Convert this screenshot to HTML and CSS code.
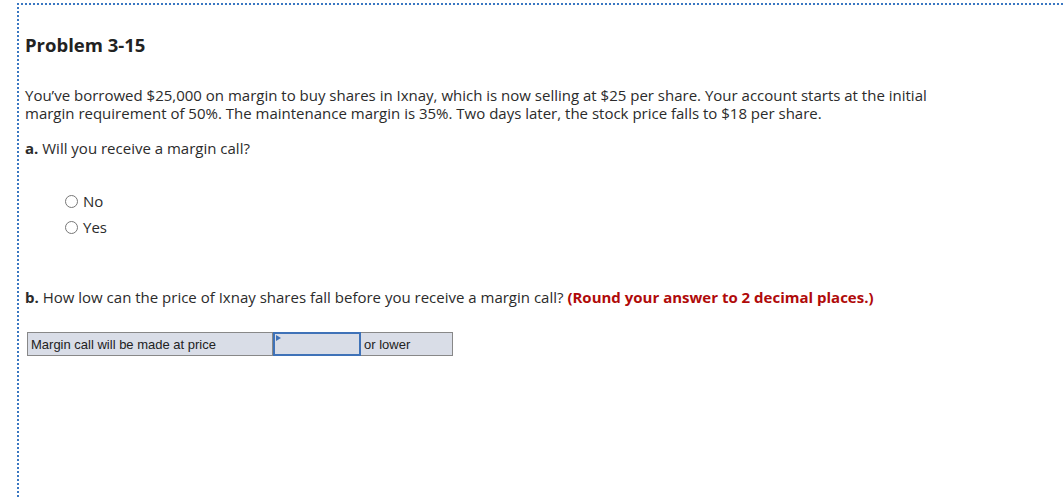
FILE: index.html
```html
<!DOCTYPE html>
<html>
<head>
<meta charset="utf-8">
<link rel="stylesheet" href="styles.css">
</head>
<body>
<div class="frame">
  <h1 class="title">Problem 3-15</h1>
  <p class="intro">You’ve borrowed $25,000 on margin to buy shares in Ixnay, which is now selling at $25 per share. Your account starts at the initial margin requirement of 50%. The maintenance margin is 35%. Two days later, the stock price falls to $18 per share.</p>
  <p class="q"><b>a.</b> Will you receive a margin call?</p>
  <div class="options">
    <label class="opt"><span class="radio"></span>No</label>
    <label class="opt"><span class="radio"></span>Yes</label>
  </div>
  <p class="q qb"><b>b.</b> How low can the price of Ixnay shares fall before you receive a margin call? <span class="hint">(Round your answer to 2 decimal places.)</span></p>
  <div class="answer">
    <div class="cell label">Margin call will be made at price</div>
    <div class="cell input"><span class="flag"></span></div>
    <div class="cell tail">or lower</div>
  </div>
</div>
</body>
</html>
```
FILE: styles.css
```css
html, body { margin: 0; padding: 0; background: #fff; overflow: hidden; }
body { width: 1063px; height: 497px; }
.frame {
  margin: 3px 0 0 17px;
  width: 1046px;
  height: 494px;
  border-top: 2px dotted #3a77c2;
  border-left: 2px dotted #3a77c2;
  padding: 28px 0 0 6px;
  box-sizing: border-box;
  font-family: "Open Sans", "Lato", sans-serif;
  color: #2b2b2b;
}
.title { margin: 0; font-size: 18.5px; font-weight: 700; line-height: 24px; color: #222; }
.intro { margin: 29px 0 0 0; width: 915px; font-size: 15px; line-height: 18px; }
.q { margin: 17px 0 0 0; font-size: 15px; line-height: 18px; }
.q b { font-weight: 700; }
.options { margin: 35px 0 0 40px; display: flex; flex-direction: column; gap: 8px; }
.opt { display: flex; align-items: center; gap: 5px; font-size: 15px; line-height: 18px; }
.radio { width: 11px; height: 11px; border: 1px solid #777; border-radius: 50%; display: inline-block; }
.qb { margin-top: 52px; }
.hint { color: #b00a0a; font-weight: 700; }
.answer {
  margin: 26px 0 0 2px;
  display: flex;
  width: 426px;
  height: 24px;
  border: 1px solid #888;
  box-sizing: border-box;
  background: #d9dde7;
  font-family: "Liberation Sans", Arial, sans-serif;
  font-size: 13px;
  color: #222;
}
.cell { display: flex; align-items: center; padding-left: 3px; }
.label { width: 245px; border-right: 1px solid #888; box-sizing: border-box; }
.input { width: 88px; border: 2px solid #3f72b8; box-sizing: border-box; margin: -1px 0; height: 24px; position: relative; padding: 0; }
.flag { position: absolute; left: 1px; top: 1px; width: 0; height: 0; border-top: 3px solid transparent; border-bottom: 3px solid transparent; border-left: 5px solid #3f72b8; }
.tail { flex: 1; }
```
